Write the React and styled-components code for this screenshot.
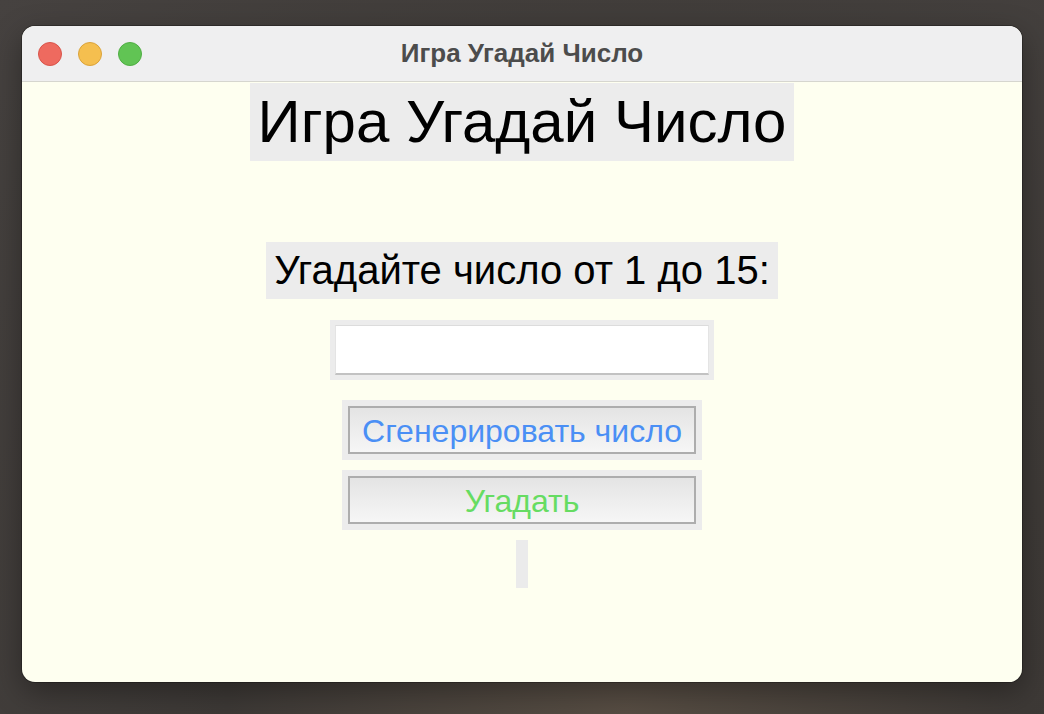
import React, { useState } from "react";
import styled, { createGlobalStyle } from "styled-components";

const GlobalStyle = createGlobalStyle`
    html, body {
        margin: 0;
        padding: 0;
    }
    body {
        width: 1044px;
        height: 714px;
        overflow: hidden;
        background: radial-gradient(ellipse at 60% 100%, #574d43 0%, #3d3936 45%, #464240 100%);
        font-family: "Liberation Sans", Arial, sans-serif;
    }
`;

const Desktop = styled.div`
    padding: 26px 22px 32px 22px;
`;

const Window = styled.div`
    height: 656px;
    border-radius: 13px;
    overflow: hidden;
    display: flex;
    flex-direction: column;
    background: #fefff0;
    box-shadow: 0 0 0 1px rgba(0, 0, 0, 0.25), 0 10px 30px rgba(0, 0, 0, 0.35);
`;

const TitleBar = styled.div`
    height: 55px;
    flex-shrink: 0;
    display: flex;
    align-items: center;
    position: relative;
    background: #efeff0;
    border-bottom: 1px solid #d6d6cf;
`;

const Lights = styled.div`
    display: flex;
    gap: 16px;
    padding-left: 16px;
`;

const Light = styled.span`
    width: 24px;
    height: 24px;
    border-radius: 50%;
    box-sizing: border-box;
    background: ${(p) => p.color};
    border: 1px solid ${(p) => p.edge};
`;

const WindowTitle = styled.div`
    position: absolute;
    left: 0;
    right: 0;
    text-align: center;
    font-weight: bold;
    font-size: 26px;
    color: #4c4c4c;
    pointer-events: none;
`;

const Content = styled.div`
    flex: 1;
    display: flex;
    flex-direction: column;
    align-items: center;
`;

const Label = styled.div`
    background: #ececec;
    color: #000;
    font-size: ${(p) => p.size}px;
    line-height: ${(p) => p.height}px;
    padding: 0 8px;
    margin-top: ${(p) => p.top}px;
    white-space: nowrap;
`;

const EntryFrame = styled.div`
    margin-top: 21px;
    background: #ececec;
    padding: 5px;
`;

const Entry = styled.input`
    display: block;
    width: 374px;
    height: 50px;
    box-sizing: border-box;
    border: none;
    border-top: 1px solid #dcdcdc;
    border-left: 1px solid #e4e4e4;
    border-right: 1px solid #e4e4e4;
    border-bottom: 2px solid #c2c2c2;
    background: #fff;
    outline: none;
    font-family: "Liberation Sans", Arial, sans-serif;
    font-size: 24px;
    padding: 0 8px;
`;

const ButtonFrame = styled.div`
    margin-top: ${(p) => p.top}px;
    background: #ececec;
    padding: 6px;
`;

const Button = styled.button`
    display: block;
    width: 348px;
    height: 48px;
    box-sizing: border-box;
    border: 2px solid #adadad;
    background: linear-gradient(#e4e4e4, #f6f6f6);
    color: ${(p) => p.tone};
    font-family: "Liberation Sans", Arial, sans-serif;
    font-size: 32px;
    padding: 3px 0 0 0;
    white-space: nowrap;
    cursor: pointer;
`;

const ResultLabel = styled.div`
    margin-top: 10px;
    width: 12px;
    height: 48px;
    background: #ebebeb;
`;

const App = () => {
    const [guess, setGuess] = useState("");

    return (
        <>
            <GlobalStyle />
            <Desktop>
                <Window>
                    <TitleBar>
                        <Lights>
                            <Light color="#ee6a5f" edge="#d9544a" />
                            <Light color="#f5bf4f" edge="#dba33a" />
                            <Light color="#61c454" edge="#4fae43" />
                        </Lights>
                        <WindowTitle>Игра Угадай Число</WindowTitle>
                    </TitleBar>
                    <Content>
                        <Label size={60} height={78} top={1}>
                            Игра Угадай Число
                        </Label>
                        <Label size={40} height={57} top={81}>
                            Угадайте число от 1 до 15:
                        </Label>
                        <EntryFrame>
                            <Entry
                                value={guess}
                                onChange={(e) => setGuess(e.target.value)}
                            />
                        </EntryFrame>
                        <ButtonFrame top={20}>
                            <Button tone="#4a8ff5">Сгенерировать число</Button>
                        </ButtonFrame>
                        <ButtonFrame top={10}>
                            <Button tone="#66dc62">Угадать</Button>
                        </ButtonFrame>
                        <ResultLabel />
                    </Content>
                </Window>
            </Desktop>
        </>
    );
};

export default App;
